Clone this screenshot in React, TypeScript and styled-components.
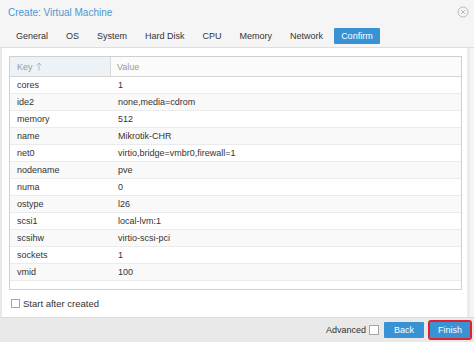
import React from 'react'
import styled, { createGlobalStyle } from 'styled-components'

const GlobalStyle = createGlobalStyle`
  html, body {
    margin: 0;
    padding: 0;
    background: #ffffff;
  }
  body {
    font-family: 'Liberation Sans', Arial, sans-serif;
  }
`

const Window = styled.div`
  width: 474px;
  height: 342px;
  display: flex;
  flex-direction: column;
  background: #f5f5f5;
  color: #333;
  overflow: hidden;
`

const TitleBar = styled.div`
  height: 24px;
  display: flex;
  align-items: center;
  justify-content: space-between;
  padding: 0 5px 0 8px;
`

const Title = styled.span`
  font-size: 10px;
  color: #4f95d0;
`

const CloseButton = styled.span`
  display: flex;
  width: 12px;
  height: 12px;
`

const TabBar = styled.div`
  height: 23px;
  display: flex;
  align-items: center;
  gap: 4px;
  padding-left: 9px;
  border-bottom: 1px solid #dedede;
`

const Tab = styled.span<{ $active?: boolean }>`
  height: 16px;
  line-height: 16px;
  padding: 0 7px;
  font-size: 9px;
  border-radius: 1px;
  color: ${(p) => (p.$active ? '#ffffff' : '#333333')};
  background: ${(p) => (p.$active ? '#3892d4' : 'transparent')};
`

const Body = styled.div`
  flex: 1;
  display: flex;
  flex-direction: column;
  background: #ffffff;
  padding: 8px 9px 0 9px;
  border-left: 2px solid #e8e8e8;
  border-right: 3px solid #ececec;
  margin-right: 4px;
  box-sizing: border-box;
`

const Grid = styled.div`
  height: 234px;
  border: 1px solid #d0d0d0;
  box-sizing: border-box;
  margin-left: -2px;
  margin-right: -4px;
  display: flex;
  flex-direction: column;
`

const HeaderRow = styled.div`
  height: 20px;
  display: grid;
  grid-template-columns: 101px 1fr;
  border-bottom: 1px solid #d4d4d4;
  box-sizing: border-box;
`

const HeaderCell = styled.div<{ $sorted?: boolean }>`
  display: flex;
  align-items: center;
  gap: 3px;
  padding-left: ${(p) => (p.$sorted ? '7px' : '6px')};
  font-size: 9px;
  color: #999;
  background: ${(p) => (p.$sorted ? '#edf2f7' : '#fbfbfb')};
  border-right: ${(p) => (p.$sorted ? '1px solid #dadada' : 'none')};
`

const Row = styled.div<{ $odd?: boolean }>`
  height: 17px;
  display: grid;
  grid-template-columns: 101px 1fr;
  align-items: center;
  font-size: 9px;
  color: #333;
  background: ${(p) => (p.$odd ? '#f9f9f9' : '#ffffff')};
  border-bottom: 1px solid #ebebeb;
  box-sizing: border-box;
`

const KeyCell = styled.span`
  padding-left: 7px;
`

const ValueCell = styled.span`
  padding-left: 7px;
`

const CheckRow = styled.label`
  height: 27px;
  display: flex;
  align-items: center;
  gap: 3px;
  font-size: 9.5px;
  color: #333;
`

const Box = styled.span<{ $size: number }>`
  display: inline-block;
  width: ${(p) => p.$size}px;
  height: ${(p) => p.$size}px;
  border: 1px solid #a6a6a6;
  background: #ffffff;
  box-sizing: border-box;
`

const Footer = styled.div`
  height: 25px;
  display: flex;
  align-items: center;
  justify-content: flex-end;
  gap: 4px;
  padding-right: 4px;
  background: #e9e9e9;
  border-top: 1px solid #dcdcdc;
  box-sizing: border-box;
`

const Advanced = styled.span`
  display: flex;
  align-items: center;
  gap: 3px;
  font-size: 9px;
  color: #333;
  margin-right: 1px;
`

const Button = styled.span<{ $focused?: boolean }>`
  width: 40px;
  height: 16px;
  display: flex;
  align-items: center;
  justify-content: center;
  font-size: 9px;
  color: #ffffff;
  background: #3892d4;
  border-radius: 1px;
  outline: ${(p) => (p.$focused ? '2px solid #e0202a' : 'none')};
  outline-offset: 0;
  margin-left: ${(p) => (p.$focused ? '2px' : '0')};
`

const tabs = ['General', 'OS', 'System', 'Hard Disk', 'CPU', 'Memory', 'Network', 'Confirm']

const rows: [string, string][] = [
  ['cores', '1'],
  ['ide2', 'none,media=cdrom'],
  ['memory', '512'],
  ['name', 'Mikrotik-CHR'],
  ['net0', 'virtio,bridge=vmbr0,firewall=1'],
  ['nodename', 'pve'],
  ['numa', '0'],
  ['ostype', 'l26'],
  ['scsi1', 'local-lvm:1'],
  ['scsihw', 'virtio-scsi-pci'],
  ['sockets', '1'],
  ['vmid', '100'],
]

const CloseIcon = () => (
  <svg width="12" height="12" viewBox="0 0 12 12">
    <circle cx="6" cy="6" r="5" fill="none" stroke="#a8b4c0" strokeWidth="0.9" />
    <path d="M4 4 L8 8 M8 4 L4 8" stroke="#a8b4c0" strokeWidth="0.9" />
  </svg>
)

const App: React.FC = () => {
  return (
    <>
      <GlobalStyle />
      <Window>
        <TitleBar>
          <Title>Create: Virtual Machine</Title>
          <CloseButton>
            <CloseIcon />
          </CloseButton>
        </TitleBar>
        <TabBar>
          {tabs.map((t) => (
            <Tab key={t} $active={t === 'Confirm'}>
              {t}
            </Tab>
          ))}
        </TabBar>
        <Body>
          <Grid>
            <HeaderRow>
              <HeaderCell $sorted>
                Key
                <svg width="6" height="9" viewBox="0 0 6 9">
                  <path d="M3 8.5 V1 M0.5 3.5 L3 1 L5.5 3.5" fill="none" stroke="#b0b0b0" strokeWidth="0.8" />
                </svg>
              </HeaderCell>
              <HeaderCell>Value</HeaderCell>
            </HeaderRow>
            {rows.map(([k, v], i) => (
              <Row key={k} $odd={i % 2 === 1}>
                <KeyCell>{k}</KeyCell>
                <ValueCell>{v}</ValueCell>
              </Row>
            ))}
          </Grid>
          <CheckRow>
            <Box $size={9} />
            Start after created
          </CheckRow>
        </Body>
        <Footer>
          <Advanced>
            Advanced
            <Box $size={10} />
          </Advanced>
          <Button>Back</Button>
          <Button $focused>Finish</Button>
        </Footer>
      </Window>
    </>
  )
}

export default App
